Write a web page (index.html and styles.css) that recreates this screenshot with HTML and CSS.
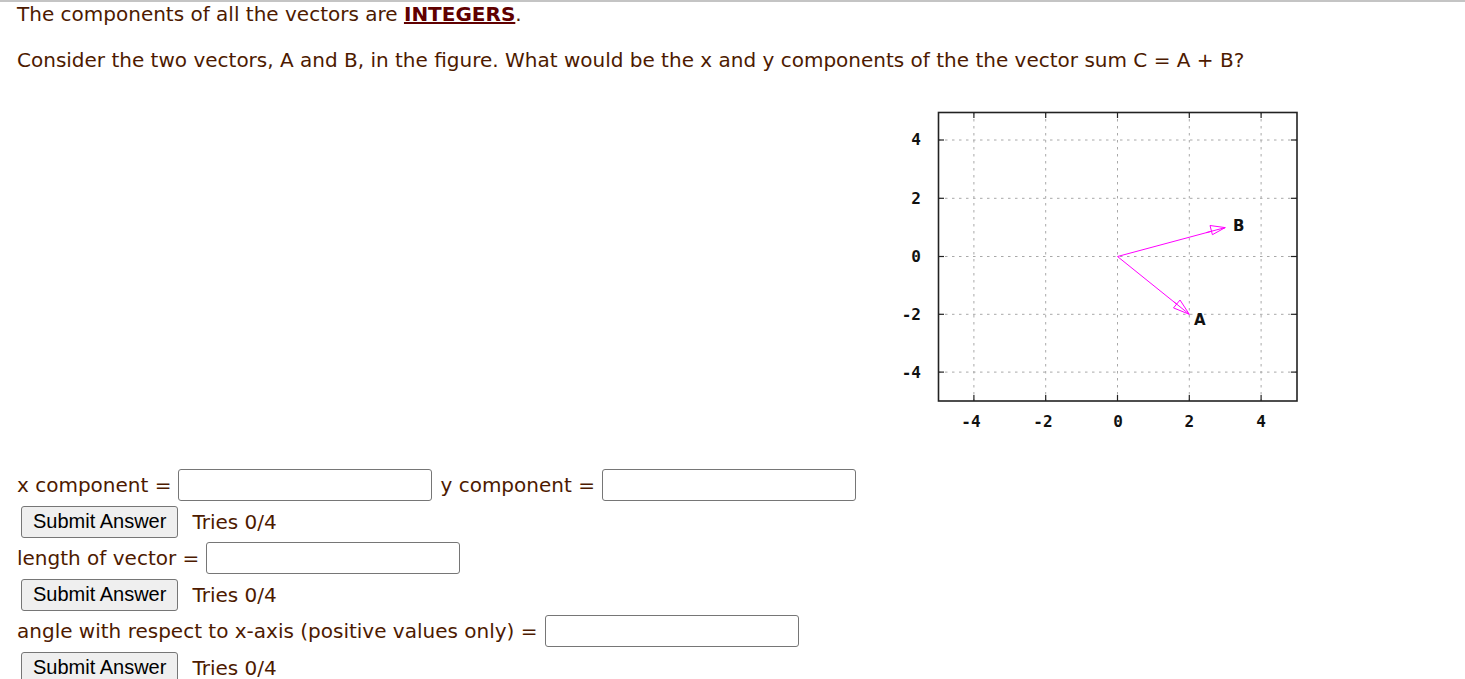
FILE: index.html
```html
<!DOCTYPE html>
<html>
<head>
<meta charset="utf-8">
<link rel="stylesheet" href="styles.css">
</head>
<body>
<div class="topline"></div>
<div class="content">
  <p class="line first">The components of all the vectors are <b class="emph">INTEGERS</b>.</p>
  <p class="line second">Consider the two vectors, A and B, in the figure. What would be the x and y components of the the vector sum C = A + B?</p>
  <div class="figure">
    <svg width="420" height="340" viewBox="0 0 420 340" xmlns="http://www.w3.org/2000/svg">
      <g class="grid" stroke="#a8a8a8" stroke-width="1" stroke-dasharray="2.5,4.5" fill="none">
        <line x1="83.9" y1="13" x2="83.9" y2="302"/>
        <line x1="155.7" y1="13" x2="155.7" y2="302"/>
        <line x1="227.5" y1="13" x2="227.5" y2="302"/>
        <line x1="299.3" y1="13" x2="299.3" y2="302"/>
        <line x1="371.1" y1="13" x2="371.1" y2="302"/>
        <line x1="48" y1="41" x2="407" y2="41"/>
        <line x1="48" y1="99.3" x2="407" y2="99.3"/>
        <line x1="48" y1="157.5" x2="407" y2="157.5"/>
        <line x1="48" y1="215.3" x2="407" y2="215.3"/>
        <line x1="48" y1="273.1" x2="407" y2="273.1"/>
      </g>
      <g stroke="#222" stroke-width="1.2" fill="none">
        <line x1="48" y1="41" x2="54" y2="41"/><line x1="401" y1="41" x2="407" y2="41"/>
        <line x1="48" y1="99.3" x2="54" y2="99.3"/><line x1="401" y1="99.3" x2="407" y2="99.3"/>
        <line x1="48" y1="157.5" x2="54" y2="157.5"/><line x1="401" y1="157.5" x2="407" y2="157.5"/>
        <line x1="48" y1="215.3" x2="54" y2="215.3"/><line x1="401" y1="215.3" x2="407" y2="215.3"/>
        <line x1="48" y1="273.1" x2="54" y2="273.1"/><line x1="401" y1="273.1" x2="407" y2="273.1"/>
        <line x1="83.9" y1="13" x2="83.9" y2="19"/><line x1="83.9" y1="296" x2="83.9" y2="302"/>
        <line x1="155.7" y1="13" x2="155.7" y2="19"/><line x1="155.7" y1="296" x2="155.7" y2="302"/>
        <line x1="227.5" y1="13" x2="227.5" y2="19"/><line x1="227.5" y1="296" x2="227.5" y2="302"/>
        <line x1="299.3" y1="13" x2="299.3" y2="19"/><line x1="299.3" y1="296" x2="299.3" y2="302"/>
        <line x1="371.1" y1="13" x2="371.1" y2="19"/><line x1="371.1" y1="296" x2="371.1" y2="302"/>
      </g>
      <rect x="48.5" y="13.5" width="358.5" height="288.5" fill="none" stroke="#222" stroke-width="1.6"/>
      <g class="ticklabels" font-family="'DejaVu Sans Mono', monospace" font-weight="bold" font-size="16" fill="#111">
        <text x="31" y="46" text-anchor="end">4</text>
        <text x="31" y="104.5" text-anchor="end">2</text>
        <text x="31" y="162.5" text-anchor="end">0</text>
        <text x="31" y="220.5" text-anchor="end">-2</text>
        <text x="31" y="278.5" text-anchor="end">-4</text>
        <text x="81" y="328" text-anchor="middle">-4</text>
        <text x="153" y="328" text-anchor="middle">-2</text>
        <text x="228" y="328" text-anchor="middle">0</text>
        <text x="299.3" y="328" text-anchor="middle">2</text>
        <text x="371.1" y="328" text-anchor="middle">4</text>
      </g>
      <g stroke="#ff00ff" stroke-width="1" fill="none">
        <line x1="227.5" y1="157.5" x2="299.3" y2="215.3"/>
        <polygon points="299.3,215.3 283.5,208.9 290.0,201.0" fill="#fff"/>
        <line x1="283.8" y1="202.8" x2="299.3" y2="215.3"/>
        <line x1="227.5" y1="157.5" x2="335.2" y2="128.6"/>
        <polygon points="335.2,128.6 320.0,126.5 322.4,135.7" fill="#fff"/>
        <line x1="316" y1="133.7" x2="335.2" y2="128.6"/>
      </g>
      <g font-family="'DejaVu Sans', sans-serif" font-weight="bold" font-size="15" fill="#111">
        <text x="343" y="132">B</text>
        <text x="304" y="226">A</text>
      </g>
    </svg>
  </div>
  <div class="form">
    <div class="row">
      <span class="label">x component =</span>
      <input class="field" type="text">
      <span class="label after">y component =</span>
      <input class="field" type="text">
    </div>
    <div class="row submit">
      <button class="btn">Submit Answer</button>
      <span class="tries">Tries 0/4</span>
    </div>
    <div class="row">
      <span class="label">length of vector =</span>
      <input class="field" type="text">
    </div>
    <div class="row submit">
      <button class="btn">Submit Answer</button>
      <span class="tries">Tries 0/4</span>
    </div>
    <div class="row">
      <span class="label">angle with respect to x-axis (positive values only) =</span>
      <input class="field" type="text">
    </div>
    <div class="row submit">
      <button class="btn">Submit Answer</button>
      <span class="tries">Tries 0/4</span>
    </div>
  </div>
</div>
</body>
</html>
```

FILE: styles.css
```css
html, body {
  margin: 0;
  padding: 0;
  background: #fff;
}
body {
  font-family: "DejaVu Sans", Verdana, sans-serif;
  font-size: 20px;
  color: #4d1a00;
  overflow: hidden;
}
.topline {
  height: 2px;
  background: #c4c4c4;
}
.content {
  padding-left: 17px;
}
.line {
  margin: 0;
  line-height: 24px;
}
.first {
  padding-top: 0;
}
.second {
  margin-top: 22px;
}
.emph {
  color: #600000;
  text-decoration: underline;
}
.figure {
  margin-top: 27px;
  margin-left: 873px;
  height: 340px;
}
.figure svg {
  display: block;
}
.form {
  margin-top: 30px;
  display: flex;
  flex-direction: column;
  gap: 4.6px;
}
.row {
  display: flex;
  align-items: center;
  height: 32px;
}
.label {
  white-space: pre;
  margin-right: 7px;
}
.label.after {
  margin-left: 8px;
  margin-right: 7px;
}
.field {
  box-sizing: border-box;
  width: 254px;
  height: 32px;
  margin: 0;
  border: 1px solid #767676;
  border-radius: 3px;
  background: #fff;
  padding: 0 4px;
}
.submit {
  padding-left: 4px;
}
.btn {
  box-sizing: border-box;
  height: 32px;
  padding: 0 11px;
  margin: 0;
  font-family: "Liberation Sans", Arial, sans-serif;
  font-size: 20px;
  color: #000;
  background: #efefef;
  border: 1px solid #767676;
  border-radius: 3px;
}
.tries {
  margin-left: 14px;
}
```
